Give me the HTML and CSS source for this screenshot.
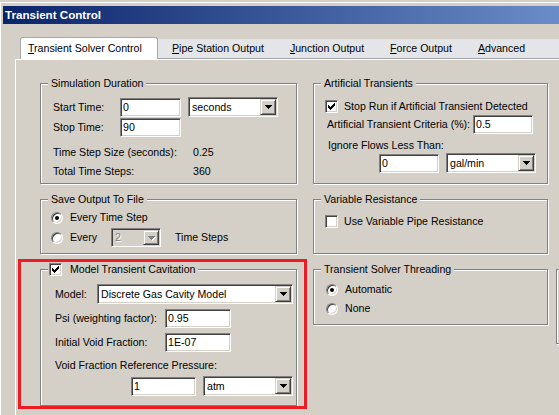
FILE: index.html
```html
<!DOCTYPE html>
<html lang="en">
<head>
<meta charset="utf-8">
<title>Transient Control</title>
<link rel="stylesheet" href="styles.css">
</head>
<body>
<div class="window">
  <div class="titlebar">Transient Control</div>
  <div class="tabctl">
    <div class="tabrow">
      <div class="tab active"><u>T</u>ransient Solver Control</div>
      <div class="tabstrip">
        <div class="tab first"><u>P</u>ipe Station Output</div>
        <div class="tab"><u>J</u>unction Output</div>
        <div class="tab"><u>F</u>orce Output</div>
        <div class="tab"><u>A</u>dvanced</div>
      </div>
    </div>
    <div class="panel">
      <div class="row">
        <fieldset class="group g-left">
          <legend>Simulation Duration</legend>
          <div class="gbody sim">
            <div class="line">
              <span class="lbl w67">Start Time:</span>
              <div class="edit w61">0</div>
              <div class="combo w90 ml7"><span class="ctext">seconds</span><span class="cbtn"><svg width="7" height="4" viewBox="0 0 7 4"><path d="M0 0h7v1h-1v1h-1v1h-1v1h-1v-1h-1v-1h-1v-1h-1z"/></svg></span></div>
            </div>
            <div class="line mt1">
              <span class="lbl w67">Stop Time:</span>
              <div class="edit w61">90</div>
            </div>
            <div class="text mt9"><span class="lbl w140">Time Step Size (seconds):</span><span>0.25</span></div>
            <div class="text mt6"><span class="lbl w140">Total Time Steps:</span><span>360</span></div>
          </div>
        </fieldset>
        <fieldset class="group g-right">
          <legend>Artificial Transients</legend>
          <div class="gbody art">
            <div class="opt"><span class="chk"><svg width="7" height="7" viewBox="0 0 7 7"><path d="M0 2h1v1h1v1h1v-1h1v-1h1v-1h1v-1h1v3h-1v1h-1v1h-1v1h-1v1h-1v-1h-1v-1h-1z"/></svg></span><span>Stop Run if Artificial Transient Detected</span></div>
            <div class="line mt2">
              <span class="lbl w146 ml2">Artificial Transient Criteria (%):</span>
              <div class="edit w60">0.5</div>
            </div>
            <div class="text mt5 ml3">Ignore Flows Less Than:</div>
            <div class="line mt1">
              <div class="edit w60 ml54">0</div>
              <div class="combo w90 ml7"><span class="ctext">gal/min</span><span class="cbtn"><svg width="7" height="4" viewBox="0 0 7 4"><path d="M0 0h7v1h-1v1h-1v1h-1v1h-1v-1h-1v-1h-1v-1h-1z"/></svg></span></div>
            </div>
          </div>
        </fieldset>
      </div>

      <div class="row">
        <fieldset class="group g-left">
          <legend>Save Output To File</legend>
          <div class="gbody save">
            <div class="opt"><span class="radio on"></span><span>Every Time Step</span></div>
            <div class="line mt4 center">
              <span class="radio"></span>
              <span class="lbl w41 ml6">Every</span>
              <div class="combo disabled w50 h19"><span class="ctext">2</span><span class="cbtn"><svg width="7" height="4" viewBox="0 0 7 4"><path d="M0 0h7v1h-1v1h-1v1h-1v1h-1v-1h-1v-1h-1v-1h-1z"/></svg></span></div>
              <span class="ml14">Time Steps</span>
            </div>
          </div>
        </fieldset>
        <fieldset class="group g-right">
          <legend>Variable Resistance</legend>
          <div class="gbody varres">
            <div class="opt"><span class="chk"></span><span>Use Variable Pipe Resistance</span></div>
          </div>
        </fieldset>
      </div>

      <div class="row top">
        <fieldset class="group g-left">
          <legend class="chk-legend"><span class="chk"><svg width="7" height="7" viewBox="0 0 7 7"><path d="M0 2h1v1h1v1h1v-1h1v-1h1v-1h1v-1h1v3h-1v1h-1v1h-1v1h-1v1h-1v-1h-1v-1h-1z"/></svg></span><span>Model Transient Cavitation</span></legend>
          <div class="gbody cav">
            <div class="line center">
              <span class="lbl w42">Model:</span>
              <div class="combo w196"><span class="ctext">Discrete Gas Cavity Model</span><span class="cbtn"><svg width="7" height="4" viewBox="0 0 7 4"><path d="M0 0h7v1h-1v1h-1v1h-1v1h-1v-1h-1v-1h-1v-1h-1z"/></svg></span></div>
            </div>
            <div class="line mt5 center">
              <span class="lbl w110">Psi (weighting factor):</span>
              <div class="edit w66">0.95</div>
            </div>
            <div class="line mt5 center">
              <span class="lbl w110">Initial Void Fraction:</span>
              <div class="edit w66">1E-07</div>
            </div>
            <div class="text mt7">Void Fraction Reference Pressure:</div>
            <div class="line mt4">
              <div class="edit w65 ml76">1</div>
              <div class="combo w90 ml7"><span class="ctext">atm</span><span class="cbtn"><svg width="7" height="4" viewBox="0 0 7 4"><path d="M0 0h7v1h-1v1h-1v1h-1v1h-1v-1h-1v-1h-1v-1h-1z"/></svg></span></div>
            </div>
          </div>
        </fieldset>
        <fieldset class="group g-right">
          <legend>Transient Solver Threading</legend>
          <div class="gbody thread">
            <div class="opt"><span class="radio on"></span><span>Automatic</span></div>
            <div class="opt mt6"><span class="radio"></span><span>None</span></div>
          </div>
        </fieldset>
        <fieldset class="group g-edge"></fieldset>
      </div>
    </div>
  </div>
</div>
<div class="highlight"></div>
</body>
</html>
```
FILE: styles.css
```css
html, body {
  margin: 0;
  height: 100%;
  overflow: hidden;
}
body {
  background: #d4d0c8;
  font-family: "Liberation Sans", Arial, sans-serif;
  font-size: 10.6px;
  line-height: 13px;
  color: #000;
}
.window {
  margin-top: 2px;
  border-top: 1px solid #fff;
  border-left: 1px solid #fff;
  padding: 3px 0 0 2px;
  height: calc(100vh - 2px);
  box-sizing: border-box;
  display: flex;
  flex-direction: column;
  overflow: hidden;
}
.titlebar {
  flex: none;
  height: 18px;
  line-height: 18px;
  background: linear-gradient(to right, #0a246a 0, #6a8cc8 556px);
  color: #fff;
  font-weight: bold;
  font-size: 11.6px;
  padding-left: 2px;
  white-space: nowrap;
}
.tabctl {
  flex: 1;
  min-height: 0;
  display: flex;
  flex-direction: column;
  margin: 13px 0 0 12px;
}
.tabrow {
  flex: none;
  display: flex;
  align-items: flex-end;
  height: 22px;
  padding-left: 5px;
}
.tab {
  white-space: nowrap;
}
.tab.active {
  flex: none;
  width: 138px;
  height: 22px;
  box-sizing: border-box;
  background: #fff;
  border: 1px solid #a8a8a8;
  border-bottom: 0;
  border-radius: 3px 3px 0 0;
  padding: 4px 0 0 7px;
}
.tabstrip {
  flex: 1;
  min-width: 0;
  display: flex;
  height: 20px;
  box-sizing: border-box;
  background: #e3e5e8;
  border-bottom: 1px solid #a0a4a8;
  padding-top: 3px;
  overflow: hidden;
}
.tabstrip .tab {
  padding: 0 13px;
}
.tabstrip .tab.first {
  padding-left: 14px;
}
.panel {
  flex: 1;
  min-height: 0;
  border-top: 1px solid #fff;
  border-left: 1px solid #fff;
  padding: 17px 0 0 24px;
  overflow: hidden;
}
.row {
  display: flex;
  gap: 16px;
}
.row + .row {
  margin-top: 9px;
}
.row.top {
  align-items: flex-start;
}
.group {
  flex: none;
  margin: 0;
  padding: 0;
  min-width: 0;
  box-sizing: border-box;
  border: 1px solid #808080;
  box-shadow: inset 1px 1px 0 #fff, 1px 1px 0 #fff;
}
.group legend {
  margin-left: 7px;
  padding: 0 3px;
  background: #d4d0c8;
  line-height: 13px;
  white-space: nowrap;
}
.group legend.chk-legend {
  display: flex;
  align-items: center;
  gap: 8px;
  padding-left: 1px;
}
.g-left { width: 257px; }
.g-right { width: 235px; }
.g-edge {
  width: 60px;
  height: 75px;
  margin-top: 6px;
  margin-left: -8px;
}

.gbody.sim { padding: 7px 0 5px 12px; }
.gbody.art { padding: 10px 0 10px 11px; }
.gbody.save { padding: 5px 0 6px 10px; }
.gbody.varres { padding: 9px 0 0 11px; }
.gbody.cav { padding: 8px 0 9px 14px; }
.gbody.thread { padding: 7px 0 9px 12px; }

.line {
  display: flex;
  align-items: center;
  white-space: nowrap;
}
.text {
  display: flex;
  white-space: nowrap;
}
.lbl {
  flex: none;
  white-space: nowrap;
}
.opt {
  display: flex;
  align-items: center;
  gap: 6px;
  white-space: nowrap;
}

.w41 { width: 41px; }
.w42 { width: 42px; }
.w50 { width: 50px; }
.w60 { width: 60px; }
.w61 { width: 61px; }
.w65 { width: 65px; }
.w66 { width: 66px; }
.w67 { width: 67px; }
.w90 { width: 90px; }
.w110 { width: 110px; }
.w140 { width: 140px; }
.w146 { width: 146px; }
.w196 { width: 196px; }
.ml2 { margin-left: 2px; }
.ml3 { margin-left: 3px; }
.ml6 { margin-left: 6px; }
.ml7 { margin-left: 7px; }
.ml14 { margin-left: 14px; }
.ml54 { margin-left: 54px; }
.ml76 { margin-left: 76px; }
.mt1 { margin-top: 1px; }
.mt2 { margin-top: 2px; }
.mt4 { margin-top: 4px; }
.mt5 { margin-top: 5px; }
.mt6 { margin-top: 6px; }
.mt7 { margin-top: 7px; }
.mt9 { margin-top: 9px; }

.edit {
  flex: none;
  height: 19px;
  box-sizing: border-box;
  background: #fff;
  border: 1px solid;
  border-color: #808080 #fff #fff #808080;
  box-shadow: inset 1px 1px 0 #404040, inset -1px -1px 0 #d4d0c8;
  padding: 2px 0 0 2px;
  white-space: nowrap;
}
.combo {
  flex: none;
  display: flex;
  height: 20px;
  box-sizing: border-box;
  background: #fff;
  border: 1px solid;
  border-color: #808080 #fff #fff #808080;
  box-shadow: inset 1px 1px 0 #404040, inset -1px -1px 0 #d4d0c8;
}
.combo.h19 { height: 19px; }
.ctext {
  flex: 1;
  padding: 3px 0 0 3px;
  white-space: nowrap;
  overflow: hidden;
}
.cbtn {
  flex: none;
  width: 16px;
  margin: 1px;
  box-sizing: border-box;
  background: #d4d0c8;
  border: 1px solid;
  border-color: #d4d0c8 #404040 #404040 #d4d0c8;
  box-shadow: inset 1px 1px 0 #fff, inset -1px -1px 0 #808080;
  display: flex;
  align-items: center;
  justify-content: center;
}
.cbtn svg {
  display: block;
  shape-rendering: crispEdges;
  fill: #000;
}
.combo.disabled {
  background: #d4d0c8;
}
.combo.disabled .ctext {
  color: #808080;
  text-shadow: 1px 1px 0 #fff;
  padding-top: 2px;
}
.combo.disabled .cbtn svg {
  fill: #808080;
  filter: drop-shadow(1px 1px 0 #fff);
}

.chk {
  flex: none;
  width: 13px;
  height: 13px;
  box-sizing: border-box;
  background: #fff;
  border: 1px solid;
  border-color: #808080 #fff #fff #808080;
  box-shadow: inset 1px 1px 0 #404040, inset -1px -1px 0 #d4d0c8;
}
.chk svg {
  display: block;
  margin: 2px;
  shape-rendering: crispEdges;
  fill: #000;
}
.radio {
  flex: none;
  width: 12px;
  height: 12px;
  margin-right: 1px;
  box-sizing: border-box;
  border-radius: 50%;
  background: #fff;
  border: 1px solid;
  border-color: #808080 #fff #fff #808080;
  box-shadow: inset 1px 1px 0 #404040, inset -1px -1px 0 #d4d0c8;
}
.radio.on::after {
  content: "";
  display: block;
  width: 4px;
  height: 4px;
  margin: 3px;
  border-radius: 50%;
  background: #000;
}

.highlight {
  position: absolute;
  left: 18px;
  top: 259px;
  width: 289px;
  height: 150px;
  box-sizing: border-box;
  border: 3px solid #ec1c24;
  pointer-events: none;
}
```
